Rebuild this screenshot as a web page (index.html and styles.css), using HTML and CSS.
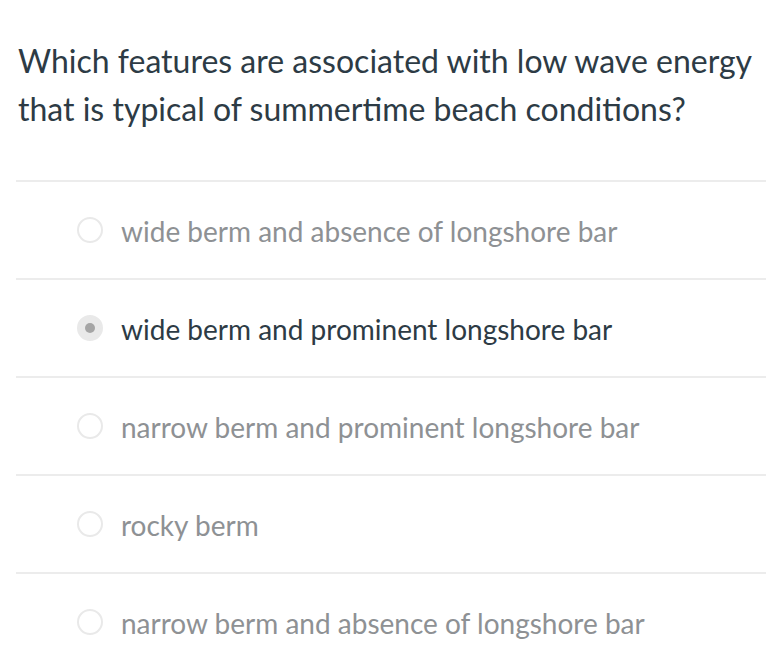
FILE: index.html
```html
<!DOCTYPE html>
<html>
<head>
<meta charset="utf-8">
<link rel="stylesheet" href="styles.css">
</head>
<body>
<div class="quiz">
  <p class="question">Which features are associated with low wave energy that is typical of summertime beach conditions?</p>
  <ul class="answers">
    <li class="answer"><span class="radio"></span><span class="label">wide berm and absence of longshore bar</span></li>
    <li class="answer selected"><span class="radio"><span class="dot"></span></span><span class="label">wide berm and prominent longshore bar</span></li>
    <li class="answer"><span class="radio"></span><span class="label">narrow berm and prominent longshore bar</span></li>
    <li class="answer"><span class="radio"></span><span class="label">rocky berm</span></li>
    <li class="answer"><span class="radio"></span><span class="label">narrow berm and absence of longshore bar</span></li>
  </ul>
</div>
</body>
</html>
```
FILE: styles.css
```css
html, body {
  margin: 0;
  padding: 0;
  background: #ffffff;
}
body {
  font-family: Lato, "Noto Sans", sans-serif;
  color: #2d3b45;
}
.quiz {
  padding: 37px 7px 0 16px;
}
.question {
  margin: 0;
  padding: 0 0 0 2px;
  font-size: 32px;
  line-height: 48px;
  color: #2d3b45;
  height: 143px;
}
.answers {
  list-style: none;
  margin: 0;
  padding: 0;
}
.answer {
  display: flex;
  align-items: center;
  height: 96px;
  border-top: 2px solid #ececec;
  padding-left: 61px;
  gap: 18px;
  font-size: 28px;
  color: #8e9194;
}
.answer.selected {
  color: #2d3b45;
}
.radio {
  width: 22px;
  height: 22px;
  border: 2px solid #e9e9e9;
  border-radius: 50%;
  display: flex;
  align-items: center;
  justify-content: center;
  flex: none;
}
.selected .radio {
  background: #e9e9e9;
}
.dot {
  width: 10px;
  height: 10px;
  border-radius: 50%;
  background: #a5a5a5;
}
.label {
  line-height: 32px;
  padding-top: 2px;
}
```
